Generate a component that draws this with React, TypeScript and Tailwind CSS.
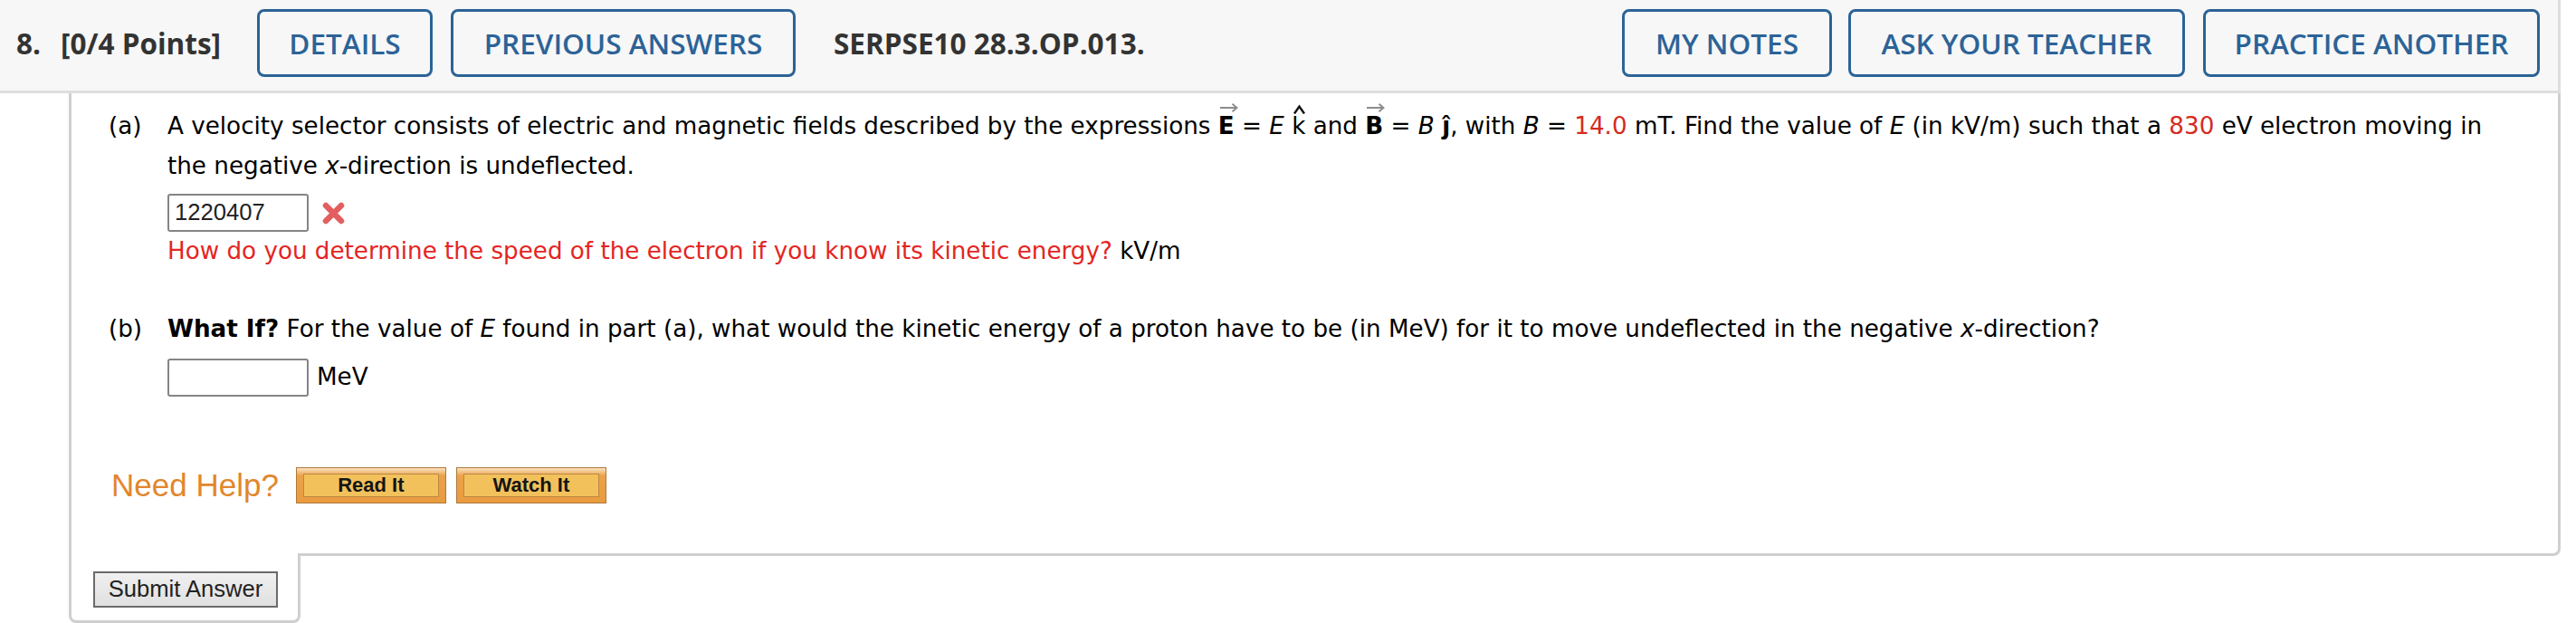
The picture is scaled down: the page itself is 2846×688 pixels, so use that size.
import React from 'react';

const BLUE = 'border-[#2c6397] text-[#2c6397]';

function HeaderBtn({ label, w, className = '' }: { label: string; w: string; className?: string }) {
  return (
    <button className={`h-[75px] flex items-center justify-center border-[3.5px] rounded-[8px] text-[31.5px] font-semibold ${BLUE} ${w} ${className}`}>
      {label}
    </button>
  );
}

function Vec({ c }: { c: string }) {
  return (
    <span className="relative inline-block font-bold">
      {c}
      <svg className="absolute left-[1px] top-[-5px] w-[22px] h-[11px]" viewBox="0 0 22 11">
        <path d="M1 6h18.5M14.5 1.8l5 4.2-5 4.2" stroke="#8c8c8c" strokeWidth="1.9" fill="none" />
      </svg>
    </span>
  );
}

function Hat({ c }: { c: string }) {
  return (
    <span className="relative inline-block">
      {c}
      <svg className="absolute left-[1px] top-[-3px] w-[15px] h-[11px]" viewBox="0 0 15 11">
        <path d="M2 10.5L7.5 2.5 13 10.5" stroke="#111" strokeWidth="2.4" fill="none" />
      </svg>
    </span>
  );
}

function HelpBtn({ label }: { label: string }) {
  return (
    <button className="h-[40px] w-[166px] p-[6px_7px] border border-[#b0783a] bg-[linear-gradient(#f9e3c2_0%,#eba24a_22%,#e99b3f_100%)]">
      <span className="h-full flex items-center justify-center border border-[#c08643] bg-[#f2c15c] font-['Liberation_Sans',Arial,sans-serif] font-bold text-[22px] text-[#151515]">
        {label}
      </span>
    </button>
  );
}

export default function App() {
  return (
    <div className="w-[2846px] h-[688px] bg-white overflow-hidden text-black font-['DejaVu_Sans',Verdana,sans-serif]">
      <div className="w-[2829px]">
        <header className="flex items-start h-[103px] pt-[10px] pl-[18px] pr-[20px] bg-[#f7f7f7] border-b-[3px] border-r-[3px] border-[#dedede] font-['Open_Sans',sans-serif]">
          <span className="h-[75px] flex items-center text-[31.5px] font-bold text-[#333]">8.</span>
          <span className="h-[75px] flex items-center ml-[22px] text-[31.5px] font-bold text-[#333]">[0/4 Points]</span>
          <HeaderBtn label="DETAILS" w="w-[194px]" className="ml-[40px]" />
          <HeaderBtn label="PREVIOUS ANSWERS" w="w-[381px]" className="ml-[20px]" />
          <span className="h-[75px] flex items-center ml-[42px] text-[31.5px] font-bold text-[#333]">SERPSE10 28.3.OP.013.</span>
          <HeaderBtn label="MY NOTES" w="w-[232px]" className="ml-auto" />
          <HeaderBtn label="ASK YOUR TEACHER" w="w-[372px]" className="ml-[18px]" />
          <HeaderBtn label="PRACTICE ANOTHER" w="w-[372px]" className="ml-[20px]" />
        </header>

        <div className="ml-[76px]">
          <div className="border-l-[3px] border-r-[3px] border-b-[3px] border-[#cfcfcf] rounded-br-[8px] pl-[41px] pr-[51px] pt-[15px] pb-[55px] text-[26.2px] leading-[43.5px]">
            <div className="flex">
              <span className="w-[65px] shrink-0">(a)</span>
              <div className="flex-1">
                <p>
                  A velocity selector consists of electric and magnetic fields described by the expressions <Vec c="E" /> = <i>E</i> <Hat c="k" /> and <Vec c="B" /> = <i>B</i> <b>ĵ</b>, with <i>B</i> = <span className="text-[#d52b21]">14.0</span> mT. Find the value of <i>E</i> (in kV/m) such that a <span className="text-[#d52b21]">830</span> eV electron moving in{' '}{'the negative '}<i>x</i>-direction is undeflected.
                </p>
                <div className="flex items-center mt-[9px]">
                  <input
                    readOnly
                    value="1220407"
                    className="w-[156px] h-[42px] border-2 border-[#858585] rounded-[3px] px-[6px] text-[25.6px] text-[#222] font-['Liberation_Sans',Arial,sans-serif] outline-none"
                  />
                  <svg className="ml-[14px] w-[27px] h-[27px]" viewBox="0 0 27 27">
                    <path d="M5 5l17 17M22 5L5 22" stroke="#e35e5e" strokeWidth="6.5" strokeLinecap="round" />
                  </svg>
                </div>
                <p>
                  <span className="text-[#e3261f]">How do you determine the speed of the electron if you know its kinetic energy?</span> kV/m
                </p>
              </div>
            </div>

            <div className="flex mt-[42px]">
              <span className="w-[65px] shrink-0">(b)</span>
              <div className="flex-1">
                <p>
                  <b>What If?</b> For the value of <i>E</i> found in part (a), what would the kinetic energy of a proton have to be (in MeV) for it to move undeflected in the negative <i>x</i>-direction?
                </p>
                <div className="flex items-center mt-[10px]">
                  <input
                    readOnly
                    value=""
                    className="w-[156px] h-[42px] border-2 border-[#858585] rounded-[3px] px-[6px] text-[25.6px] font-['Liberation_Sans',Arial,sans-serif] outline-none"
                  />
                  <span className="ml-[9px]">MeV</span>
                </div>
              </div>
            </div>

            <div className="flex items-center mt-[77px] ml-[3px]">
              <span className="font-['Liberation_Sans',Arial,sans-serif] text-[35px] leading-[40px] text-[#e2862d]">Need Help?</span>
              <div className="flex gap-[11px] ml-[19px]">
                <HelpBtn label="Read It" />
                <HelpBtn label="Watch It" />
              </div>
            </div>
          </div>

          <div className="-mt-[3px] w-[256px] h-[77px] bg-white border-l-[3px] border-r-[3px] border-b-[3px] border-[#cfcfcf] rounded-b-[8px] pt-[20px] pl-[24px]">
            <button className="h-[40px] w-[204px] border-[2.5px] border-[#6b6b6b] bg-[linear-gradient(#f0f0f0,#e0e0e0)] font-['Liberation_Sans',Arial,sans-serif] text-[25.6px] leading-none text-[#222]">
              Submit Answer
            </button>
          </div>
        </div>
      </div>
    </div>
  );
}
